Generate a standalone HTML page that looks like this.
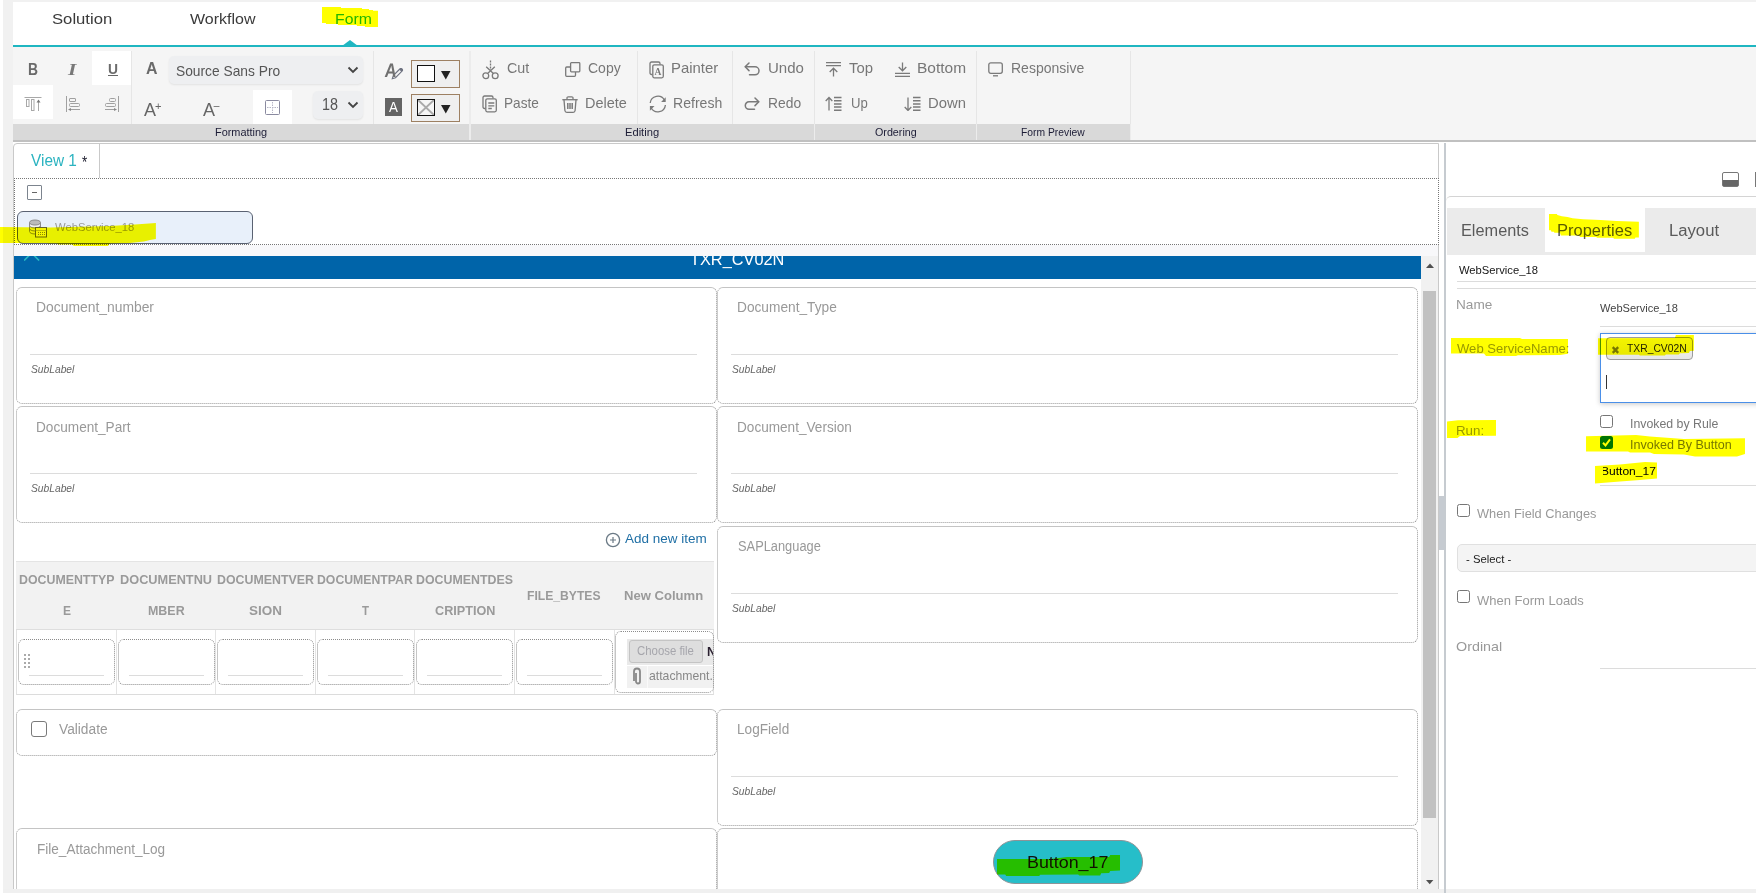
<!DOCTYPE html><html><head><meta charset="utf-8"><title>Form Designer</title><style>
html,body{margin:0;padding:0}body{width:1756px;height:893px;position:relative;overflow:hidden;background:#fff;font-family:"Liberation Sans", sans-serif}
#r{position:absolute;left:0;top:0;width:1756px;height:893px;overflow:hidden}
#r div,#r svg,#r span{position:absolute;box-sizing:border-box}
#r span{white-space:nowrap;line-height:1;transform-origin:0 0}
.hl{mix-blend-mode:multiply}
</style></head><body><div id="r">
<div style="left:3px;top:0px;width:1753px;height:893px;background:#f1f1f1"></div>
<div style="left:13px;top:2px;width:1743px;height:887px;background:#fff"></div>
<div style="left:13px;top:45px;width:1743px;height:2px;background:#1fb6c1"></div>
<svg style="left:342px;top:40px;" width="16" height="6" viewBox="0 0 16 6"><path d="M0 6 L8 0 L16 6Z" fill="#1fb6c1"/></svg>
<div style="left:13px;top:47px;width:1743px;height:77px;background:#f5f5f5"></div>
<div style="left:13px;top:124px;width:1117px;height:16px;background:#d9d9d9"></div>
<div style="left:1130px;top:124px;width:626px;height:16px;background:#f5f5f5"></div>
<div style="left:13px;top:140px;width:1743px;height:2px;background:#c0c0c0"></div>
<div style="left:131px;top:51px;width:1px;height:73px;background:#e6e6e6"></div>
<div style="left:373px;top:51px;width:1px;height:73px;background:#e6e6e6"></div>
<div style="left:637px;top:51px;width:1px;height:73px;background:#e6e6e6"></div>
<div style="left:732px;top:51px;width:1px;height:73px;background:#e6e6e6"></div>
<div style="left:814px;top:51px;width:1px;height:73px;background:#e6e6e6"></div>
<div style="left:976px;top:51px;width:1px;height:73px;background:#e6e6e6"></div>
<div style="left:1130px;top:51px;width:1px;height:73px;background:#e6e6e6"></div>
<div style="left:469px;top:51px;width:2px;height:89px;background:#ececec"></div>
<div style="left:814px;top:124px;width:1px;height:16px;background:#ececec"></div>
<div style="left:976px;top:124px;width:1px;height:16px;background:#ececec"></div>
<div style="left:1130px;top:124px;width:1px;height:16px;background:#ececec"></div>
<div style="left:92px;top:51px;width:39px;height:34px;background:#fff"></div>
<div style="left:13px;top:85px;width:40px;height:34px;background:#fff"></div>
<div style="left:253px;top:90px;width:39px;height:34px;background:#fff"></div>
<div style="left:107.5px;top:75px;width:10px;height:1px;background:#666"></div>
<svg style="left:24px;top:96px;" width="18" height="17" viewBox="0 0 18 17"><g fill="none" stroke="#a8a8a8" stroke-width="1"><path d="M0.5 1.5h17"/><rect x="2.5" y="3.5" width="2.5" height="7"/><rect x="7.5" y="3.5" width="2.5" height="11"/><path d="M14.5 15V5"/></g><path d="M12.5 6.5l2-3 2 3z" fill="#777"/></svg>
<svg style="left:65px;top:96px;" width="16" height="17" viewBox="0 0 16 17"><g fill="none" stroke="#a0a0a0" stroke-width="1"><path d="M1.5 0v16"/><rect x="4.5" y="2.5" width="6" height="3" rx="0.4"/><rect x="4.5" y="7.5" width="10" height="3" rx="1"/><path d="M4 13.500h11"/></g><path d="M3 13.500l3-1.500v3z" fill="#888"/></svg>
<svg style="left:104px;top:96px;" width="16" height="17" viewBox="0 0 16 17"><g fill="none" stroke="#a0a0a0" stroke-width="1"><path d="M14.5 0v16"/><rect x="5.5" y="2.5" width="6" height="3" rx="1"/><rect x="1.5" y="7.5" width="10" height="3" rx="1"/><path d="M1 13.500h11"/></g><path d="M13 13.500l-3-1.500v3z" fill="#888"/></svg>
<div style="left:169px;top:56px;width:194px;height:28px;background:#eeeff1;border-radius:5px;box-shadow:0 1px 2px rgba(0,0,0,.08)"></div>
<svg style="left:347px;top:66px;" width="12" height="8" viewBox="0 0 12 8"><path d="M1.5 1.500l4.5 4.5 4.5-4.5" fill="none" stroke="#444" stroke-width="1.8"/></svg>
<svg style="left:265px;top:100px;" width="15" height="15" viewBox="0 0 15 15"><rect x="0.5" y="0.5" width="14" height="14" rx="1" fill="#fff" stroke="#8a8aa0" stroke-width="1"/><path d="M7.5 2v11M2 7.500h11" stroke="#b5b5c5" stroke-width="1" stroke-dasharray="1.5 1"/></svg>
<div style="left:313px;top:91px;width:50px;height:28px;background:#eeeff1;border-radius:5px;box-shadow:0 1px 2px rgba(0,0,0,.08)"></div>
<svg style="left:347px;top:101px;" width="12" height="8" viewBox="0 0 12 8"><path d="M1.5 1.500l4.5 4.5 4.5-4.5" fill="none" stroke="#444" stroke-width="1.8"/></svg>
<svg style="left:391px;top:68px;" width="13" height="12" viewBox="0 0 13 12"><path d="M1.3 10.7l1-3.2 6.5-6.5a1.5 1.5 0 0 1 2.2 2.2l-6.5 6.5z" fill="#f5f5f5" stroke="#6e7280" stroke-width="1.1"/><path d="M8.2 1.6l2.2 2.2 0.6-0.6a1.5 1.5 0 0 0-2.2-2.2z" fill="#6e7280"/></svg>
<div style="left:411px;top:60px;width:49px;height:28px;border:1px solid #9d8062;background:#efefef"></div>
<div style="left:417px;top:65px;width:18px;height:17px;border:1px solid #111;background:#fff"></div>
<svg style="left:441px;top:71px;" width="10" height="9" viewBox="0 0 10 9"><path d="M0 0h9.5l-4.7 8.5z" fill="#222"/></svg>
<div style="left:385px;top:98px;width:17px;height:17.5px;background:#646464"></div>
<div style="left:411px;top:94px;width:49px;height:28px;border:1px solid #9d8062;background:#efefef"></div>
<div style="left:417px;top:99px;width:18px;height:17px;border:1px solid #111;background:#f6f6f6"></div>
<svg style="left:418px;top:100px;" width="16" height="15" viewBox="0 0 16 15"><path d="M0 0L16 15M16 0L0 15" stroke="#aaa" stroke-width="2"/></svg>
<svg style="left:441px;top:105px;" width="10" height="9" viewBox="0 0 10 9"><path d="M0 0h9.5l-4.7 8.5z" fill="#222"/></svg>
<svg style="left:482px;top:60px;" width="17" height="20" viewBox="0 0 17 20"><g fill="none" stroke="#7a7a7a" stroke-width="1.3"><circle cx="3.8" cy="15.7" r="2.9"/><circle cx="13.2" cy="15.7" r="2.9"/><path d="M5.6 13.4L12.8 6.800M11.4 13.400L4.2 6.8"/><path d="M8.5 0.500v9.5" stroke-dasharray="2 1"/></g></svg>
<svg style="left:565px;top:62px;" width="16" height="15" viewBox="0 0 16 15"><g fill="none" stroke="#7a7a7a" stroke-width="1.3"><rect x="5.6" y="0.7" width="9.2" height="9.2" rx="0.8"/><path d="M5.6 5H1.7a1 1 0 0 0-1 1v7.300a1 1 0 0 0 1 1h7.800a1 1 0 0 0 1-1V9.9"/></g></svg>
<svg style="left:482px;top:95px;" width="16" height="18" viewBox="0 0 16 18"><g fill="none" stroke="#7a7a7a" stroke-width="1.3"><path d="M3.5 13.500H2.500a1.5 1.5 0 0 1-1.5-1.500V2.500a1.5 1.5 0 0 1 1.5-1.500h7a1.5 1.5 0 0 1 1.5 1.500v1"/><rect x="3.8" y="3.8" width="10.5" height="13" rx="1.5"/><path d="M6.3 8h6M6.3 10.800h6M6.3 13.500h3.5"/></g></svg>
<svg style="left:562px;top:96px;" width="16" height="17" viewBox="0 0 16 17"><g fill="none" stroke="#7a7a7a" stroke-width="1.3"><path d="M0.3 3.700h15.4"/><path d="M5 3.500V2a1.2 1.2 0 0 1 1.2-1.200h3.600a1.2 1.2 0 0 1 1.2 1.200V3.5"/><path d="M2 3.900l0.9 10.600a2 2 0 0 0 2 1.800h6.200a2 2 0 0 0 2-1.800l0.9-10.6"/><path d="M5.8 7v6M8 7v6M10.2 7v6" stroke-width="1.5"/></g></svg>
<svg style="left:649px;top:61px;" width="16" height="18" viewBox="0 0 16 18"><g fill="none" stroke="#7a7a7a" stroke-width="1.3"><path d="M3.5 13.500H2.500a1.5 1.5 0 0 1-1.5-1.500V2.500a1.5 1.5 0 0 1 1.5-1.500h7a1.5 1.5 0 0 1 1.5 1.500v1"/><rect x="3.8" y="3.8" width="10.5" height="13" rx="1.5"/></g><text x="9" y="14.3" font-family="Liberation Serif" font-size="9.5" font-weight="bold" text-anchor="middle" fill="#777">A</text></svg>
<svg style="left:649px;top:95px;" width="18" height="18" viewBox="0 0 18 18"><g fill="none" stroke="#7a7a7a" stroke-width="1.3"><path d="M1.2 8a7.6 7.6 0 0 1 14.3-2.8"/><path d="M16.4 10a7.6 7.6 0 0 1-14.3 2.8"/></g><path d="M16.7 2.300v4.600h-4.600z M0.9 15.700v-4.600h4.600z" fill="#7a7a7a"/></svg>
<svg style="left:744px;top:62px;" width="17" height="14" viewBox="0 0 17 14"><g fill="none" stroke="#7a7a7a" stroke-width="1.5" stroke-linecap="round" stroke-linejoin="round"><path d="M5 1L1.2 4.8 5 8.6"/><path d="M1.5 4.800H11a4 4 0 0 1 0 8H5.5"/></g></svg>
<svg style="left:743px;top:97px;" width="17" height="14" viewBox="0 0 17 14"><g fill="none" stroke="#7a7a7a" stroke-width="1.5" stroke-linecap="round" stroke-linejoin="round"><path d="M12 1l3.8 3.800L12 8.6"/><path d="M15.5 4.800H6a3.7 3.7 0 0 0 0 7.400h5.5"/></g></svg>
<svg style="left:825px;top:62px;" width="17" height="15" viewBox="0 0 17 15"><g fill="none" stroke="#7a7a7a" stroke-width="1.3"><path d="M1 0.700h15M1 3.700h15"/><path d="M8.5 14.500V6.500M4.7 10l3.8-3.8 3.8 3.8"/></g></svg>
<svg style="left:825px;top:96px;" width="17" height="15" viewBox="0 0 17 15"><g fill="none" stroke="#7a7a7a" stroke-width="1.3"><path d="M4 14.500V1.500M0.7 5L4 1.5 7.3 5"/><path d="M9 1.500h7.500M9 4.700h7.500M9 7.900h7.500M9 11.100h7.500M9 14.300h7.5" stroke-width="1.5"/></g></svg>
<svg style="left:894px;top:62px;" width="17" height="15" viewBox="0 0 17 15"><g fill="none" stroke="#7a7a7a" stroke-width="1.3"><path d="M1 14.300h15M1 11.300h15"/><path d="M8.5 0.500V8.500M4.7 5l3.8 3.8 3.8-3.8"/></g></svg>
<svg style="left:904px;top:96px;" width="17" height="15" viewBox="0 0 17 15"><g fill="none" stroke="#7a7a7a" stroke-width="1.3"><path d="M4 1.500V14.500M0.7 11L4 14.5 7.3 11"/><path d="M9 1.500h7.500M9 4.700h7.500M9 7.900h7.500M9 11.100h7.500M9 14.300h7.5" stroke-width="1.5"/></g></svg>
<svg style="left:988px;top:62px;" width="16" height="15" viewBox="0 0 16 15"><g fill="none" stroke="#7a7a7a" stroke-width="1.3" stroke-width="1.5"><rect x="0.8" y="0.8" width="13.5" height="10.5" rx="2"/><path d="M5 13.800h5"/></g></svg>
<div style="left:13px;top:143px;width:1426px;height:760px;border:1px solid #c9c9c9;border-radius:4px 0 0 0;background:#fff"></div>
<div style="left:99px;top:144px;width:1px;height:34px;background:#c9c9c9"></div>
<div style="left:14px;top:178px;width:1425px;height:67px;border:1px dotted #777;background:#fff"></div>
<div style="left:27px;top:185px;width:15px;height:15px;border:1px solid #7c848e;border-radius:1px;background:#fff"></div>
<div style="left:32px;top:192px;width:5px;height:1px;background:#666"></div>
<div style="left:17px;top:211px;width:236px;height:33px;border:1px solid #5a6272;border-radius:6px;background:#e8f0fa"></div>
<svg style="left:28px;top:219px;" width="20" height="19" viewBox="0 0 20 19"><g fill="#efefef" stroke="#8a8a8a" stroke-width="1"><path d="M1.5 3.5v9c0 1.4 2.5 2.5 5.5 2.500s5.5-1.1 5.5-2.500v-9"/><ellipse cx="7" cy="3.5" rx="5.5" ry="2.5" fill="#bbb"/><path d="M1.5 6.500c0 1.4 2.5 2.5 5.5 2.500s5.5-1.1 5.5-2.500M1.5 9.500c0 1.4 2.5 2.5 5.5 2.500s5.5-1.1 5.5-2.5" fill="none"/></g><rect x="7.5" y="8.5" width="11" height="9.5" fill="#f4f4f4" stroke="#666" stroke-width="1"/><path d="M7.5 11.500h11M10 13.500h7M10 15.500h7" stroke="#888" stroke-width="1" stroke-dasharray="1 1"/></svg>
<div style="left:14px;top:245px;width:1424px;height:11px;background:#f8f8fa"></div>
<div style="left:14px;top:256px;width:1407px;height:23px;background:#0064a9;overflow:hidden"><span style="left:675.700px;top:-5px;font-size:17px;color:#fff;transform:scaleX(0.960)">TXR_CV02N</span></div>
<svg style="left:24px;top:256px;" width="16" height="5" viewBox="0 0 16 5"><path d="M0.1 4.5L7.6 -3 15.1 4.5" fill="none" stroke="#27b7c3" stroke-width="1.6"/></svg>
<div style="left:1421px;top:256px;width:17px;height:633px;background:#f1f1f1"></div>
<div style="left:1423px;top:291px;width:13px;height:527px;background:#c1c1c1"></div>
<svg style="left:1426px;top:263px;" width="8" height="5" viewBox="0 0 8 5"><path d="M0 5L4 0.5 8 5z" fill="#505050"/></svg>
<svg style="left:1426px;top:880px;" width="8" height="5" viewBox="0 0 8 5"><path d="M0 0L3.7 4.3 7.4 0z" fill="#505050"/></svg>
<div style="left:16px;top:287px;width:701px;height:117px;border:1px dotted #999;border-top:1px solid #c4c4c4;border-radius:6px;background:#fff"></div>
<div style="left:30px;top:354px;width:667px;height:1px;background:#dcdcdc"></div>
<div style="left:717px;top:287px;width:701px;height:117px;border:1px dotted #999;border-top:1px solid #c4c4c4;border-radius:6px;background:#fff"></div>
<div style="left:731px;top:354px;width:667px;height:1px;background:#dcdcdc"></div>
<div style="left:16px;top:406px;width:701px;height:117px;border:1px dotted #999;border-top:1px solid #c4c4c4;border-radius:6px;background:#fff"></div>
<div style="left:30px;top:473px;width:667px;height:1px;background:#dcdcdc"></div>
<div style="left:717px;top:406px;width:701px;height:117px;border:1px dotted #999;border-top:1px solid #c4c4c4;border-radius:6px;background:#fff"></div>
<div style="left:731px;top:473px;width:667px;height:1px;background:#dcdcdc"></div>
<div style="left:717px;top:526px;width:701px;height:117px;border:1px dotted #999;border-top:1px solid #c4c4c4;border-radius:6px;background:#fff"></div>
<div style="left:731px;top:593px;width:667px;height:1px;background:#dcdcdc"></div>
<div style="left:717px;top:709px;width:701px;height:117px;border:1px dotted #999;border-top:1px solid #c4c4c4;border-radius:6px;background:#fff"></div>
<div style="left:731px;top:776px;width:667px;height:1px;background:#dcdcdc"></div>
<svg style="left:605px;top:532px;" width="16" height="16" viewBox="0 0 16 16"><circle cx="8" cy="8" r="6.6" fill="none" stroke="#6b7a86" stroke-width="1.3"/><path d="M5 8h6M8 5v6" stroke="#6b7a86" stroke-width="1.2"/></svg>
<div style="left:16px;top:561px;width:698px;height:69px;background:#f2f2f2;border-top:1px solid #e4e4e4;border-bottom:1px solid #dedede"></div>
<div style="left:16px;top:630px;width:698px;height:65px;border-bottom:1px solid #dcdcdc;border-left:1px solid #e2e2e2;border-right:1px solid #e2e2e2"></div>
<div style="left:116px;top:630px;width:1px;height:64px;background:#e4e4e4"></div>
<div style="left:215px;top:630px;width:1px;height:64px;background:#e4e4e4"></div>
<div style="left:315px;top:630px;width:1px;height:64px;background:#e4e4e4"></div>
<div style="left:414px;top:630px;width:1px;height:64px;background:#e4e4e4"></div>
<div style="left:514px;top:630px;width:1px;height:64px;background:#e4e4e4"></div>
<div style="left:614px;top:630px;width:1px;height:64px;background:#e4e4e4"></div>
<div style="left:18px;top:639px;width:97px;height:46px;border:1px dotted #8c8c8c;border-radius:6px"></div>
<div style="left:29px;top:675px;width:75px;height:1px;background:#dcdcdc"></div>
<div style="left:118px;top:639px;width:97px;height:46px;border:1px dotted #8c8c8c;border-radius:6px"></div>
<div style="left:129px;top:675px;width:75px;height:1px;background:#dcdcdc"></div>
<div style="left:217px;top:639px;width:97px;height:46px;border:1px dotted #8c8c8c;border-radius:6px"></div>
<div style="left:228px;top:675px;width:75px;height:1px;background:#dcdcdc"></div>
<div style="left:317px;top:639px;width:97px;height:46px;border:1px dotted #8c8c8c;border-radius:6px"></div>
<div style="left:328px;top:675px;width:75px;height:1px;background:#dcdcdc"></div>
<div style="left:416px;top:639px;width:97px;height:46px;border:1px dotted #8c8c8c;border-radius:6px"></div>
<div style="left:427px;top:675px;width:75px;height:1px;background:#dcdcdc"></div>
<div style="left:516px;top:639px;width:97px;height:46px;border:1px dotted #8c8c8c;border-radius:6px"></div>
<div style="left:527px;top:675px;width:75px;height:1px;background:#dcdcdc"></div>
<div style="left:24px;top:654px;width:2px;height:2px;background:#aaa"></div>
<div style="left:28px;top:654px;width:2px;height:2px;background:#aaa"></div>
<div style="left:24px;top:658px;width:2px;height:2px;background:#aaa"></div>
<div style="left:28px;top:658px;width:2px;height:2px;background:#aaa"></div>
<div style="left:24px;top:662px;width:2px;height:2px;background:#aaa"></div>
<div style="left:28px;top:662px;width:2px;height:2px;background:#aaa"></div>
<div style="left:24px;top:666px;width:2px;height:2px;background:#aaa"></div>
<div style="left:28px;top:666px;width:2px;height:2px;background:#aaa"></div>
<div style="left:615px;top:631px;width:99px;height:62px;border:1px dotted #8c8c8c;border-radius:6px;overflow:hidden"><div style="left:11px;top:6.500px;width:90px;height:26px;background:#e9e9e9"></div><div style="left:13px;top:7.500px;width:74px;height:23.500px;background:#dedede;border:1px solid #c4c4c4;border-radius:3px"></div><div style="left:11px;top:33.500px;width:90px;height:22px;background:#f1f1f1"></div><div style="left:31px;top:33.500px;width:1px;height:22px;background:#fafafa"></div></div>
<div style="left:706px;top:640px;width:7px;height:20px;overflow:hidden"><span style="left:1px;top:5.500px;font-size:12.500px;color:#2a2030;font-weight:bold">N</span></div>
<svg style="left:632px;top:665px;" width="10" height="22" viewBox="0 0 10 22"><path d="M2 16V6.500a3 3 0 0 1 6 0V16.500a2 2 0 0 1-4 0V8" fill="none" stroke="#888" stroke-width="1.8"/></svg>
<div style="left:648px;top:666px;width:65px;height:20px;overflow:hidden"><span style="left:1px;top:3.300px;font-size:13px;color:#888;transform:scaleX(.940)">attachment.z</span></div>
<div style="left:16px;top:709px;width:701px;height:47px;border:1px dotted #999;border-top:1px solid #c4c4c4;border-radius:6px;background:#fff"></div>
<div style="left:31px;top:721px;width:16px;height:16px;border:1.500px solid #7a7a7a;border-radius:3px;background:#fff"></div>
<div style="left:16px;top:828px;width:701px;height:80px;border:1px dotted #999;border-top:1px solid #c4c4c4;border-radius:6px;background:#fff"></div>
<div style="left:717px;top:828px;width:701px;height:80px;border:1px dotted #999;border-top:1px solid #c4c4c4;border-radius:6px;background:#fff"></div>
<div style="left:993px;top:840px;width:150px;height:44px;background:#26bec9;border:1px solid #8c9498;border-radius:22px"></div>
<div style="left:3px;top:889px;width:1753px;height:4px;background:#f0f0f0"></div>
<div style="left:1444px;top:143px;width:2px;height:750px;background:#c6cbd0"></div>
<div style="left:1439px;top:496px;width:5px;height:54px;background:#c6cbd1"></div>
<div style="left:1722px;top:172px;width:17px;height:15px;border:1px solid #777;border-radius:2px;background:#fff"></div>
<div style="left:1723px;top:180px;width:15px;height:6px;background:#666"></div>
<div style="left:1755px;top:172px;width:3px;height:15px;border:1px solid #777;background:#fff"></div>
<div style="left:1446px;top:196px;width:320px;height:700px;border:1px solid #d4d4d4;border-left:none;border-radius:5px 0 0 0;background:#fff"></div>
<div style="left:1447px;top:208px;width:309px;height:47px;background:#ebebeb"></div>
<div style="left:1545px;top:208px;width:100px;height:44px;background:#fff"></div>
<div style="left:1457px;top:281px;width:300px;height:1px;background:#dcdcdc"></div>
<div style="left:1457px;top:288px;width:300px;height:1px;background:#dcdcdc"></div>
<div style="left:1600px;top:326px;width:157px;height:1px;background:#dcdcdc"></div>
<div style="left:1600px;top:333px;width:170px;height:70px;border:1px solid #4a8fe8;background:#fff;box-shadow:0 1px 5px rgba(0,0,0,.22)"></div>
<div style="left:1606px;top:337px;width:87px;height:22.5px;border:1px solid #9c9c9c;border-radius:4px;background:linear-gradient(#f4f4f4,#e6e6e6)"></div>
<div style="left:1606px;top:375px;width:1px;height:14px;background:#333"></div>
<div style="left:1600px;top:415px;width:13px;height:13px;border:1.300px solid #767676;border-radius:2.500px;background:#fff"></div>
<div style="left:1600px;top:436px;width:13px;height:13px;background:#0075ff;border-radius:2.500px"></div>
<svg style="left:1600px;top:436px;" width="13" height="13" viewBox="0 0 13 13"><path d="M3 6.700l2.5 2.7 4.5-6" fill="none" stroke="#fff" stroke-width="2"/></svg>
<div style="left:1603.4px;top:462px;width:60px;height:18px;overflow:hidden"><span style="left:-2.800px;top:2.700px;font-size:11.700px;color:#000;transform:scaleX(1.03)">Button_17</span></div>
<div style="left:1600px;top:485px;width:157px;height:1px;background:#dcdcdc"></div>
<div style="left:1457px;top:503.5px;width:13px;height:13px;border:1.300px solid #767676;border-radius:2.500px;background:#fff"></div>
<div style="left:1457px;top:544px;width:310px;height:28px;border:1px solid #e0e0e0;border-radius:5px;background:#f4f4f4"></div>
<div style="left:1457px;top:590px;width:13px;height:13px;border:1.300px solid #767676;border-radius:2.500px;background:#fff"></div>
<div style="left:1600px;top:668px;width:157px;height:1px;background:#dcdcdc"></div>
<div style="left:1446px;top:889px;width:310px;height:4px;background:#f0f0f0"></div>
<span style="left:52.21px;top:11.00px;font-size:15px;color:#3a3a3a;transform:scaleX(1.1109);">Solution</span>
<span style="left:189.87px;top:11.00px;font-size:15px;color:#3a3a3a;transform:scaleX(1.0662);">Workflow</span>
<span style="left:334.75px;top:11.00px;font-size:15px;color:#22b6c2;transform:scaleX(1.0522);">Form</span>
<span style="left:28.00px;top:62.00px;font-size:16px;color:#6a6a6a;font-weight:bold;transform:scaleX(0.8649);">B</span>
<span style="left:68.30px;top:61.00px;font-size:17px;color:#787878;font-family:'Liberation Serif', serif;font-weight:bold;font-style:italic;transform:scaleX(1.2679);">I</span>
<span style="left:107.50px;top:61.00px;font-size:15.5px;color:#6c6c6c;font-weight:bold;transform:scaleX(0.8926);">U</span>
<span style="left:146.00px;top:61.00px;font-size:16px;color:#6a6a6a;font-weight:bold;transform:scaleX(0.9946);">A</span>
<span style="left:175.87px;top:63.00px;font-size:15px;color:#555;transform:scaleX(0.9189);">Source Sans Pro</span>
<span style="left:144.00px;top:101.00px;font-size:18.5px;color:#666;transform:scaleX(0.9722);">A</span>
<span style="left:154.50px;top:101.00px;font-size:11px;color:#666;transform:scaleX(1.0097);">+</span>
<span style="left:203.00px;top:101.00px;font-size:18.5px;color:#666;transform:scaleX(0.9722);">A</span>
<span style="left:212.50px;top:101.00px;font-size:11px;color:#666;transform:scaleX(1.0874);">&#8722;</span>
<span style="left:321.50px;top:96.00px;font-size:16.3px;color:#555;transform:scaleX(0.8828);">18</span>
<span style="left:385.50px;top:61.00px;font-size:19.5px;color:#707070;font-weight:bold;transform:scaleX(0.8373) skewX(-7deg);">A</span>
<span style="left:389.30px;top:100.00px;font-size:14px;color:#fff;transform:scaleX(0.9525);">A</span>
<span style="left:506.69px;top:61.00px;font-size:14.5px;color:#777;transform:scaleX(0.9866);">Cut</span>
<span style="left:587.92px;top:61.00px;font-size:14.5px;color:#777;transform:scaleX(0.9644);">Copy</span>
<span style="left:504.22px;top:96.00px;font-size:14.5px;color:#777;transform:scaleX(0.9384);">Paste</span>
<span style="left:584.81px;top:96.00px;font-size:14.5px;color:#777;transform:scaleX(0.9974);">Delete</span>
<span style="left:670.81px;top:61.00px;font-size:14.5px;color:#777;transform:scaleX(1.0278);">Painter</span>
<span style="left:673.02px;top:96.00px;font-size:14.5px;color:#777;transform:scaleX(0.9707);">Refresh</span>
<span style="left:768.23px;top:61.00px;font-size:14.5px;color:#777;transform:scaleX(1.0351);">Undo</span>
<span style="left:767.62px;top:96.00px;font-size:14.5px;color:#777;transform:scaleX(0.9545);">Redo</span>
<span style="left:849.01px;top:61.00px;font-size:14.5px;color:#777;transform:scaleX(1.0266);">Top</span>
<span style="left:851.00px;top:96.00px;font-size:14.5px;color:#777;transform:scaleX(0.9058);">Up</span>
<span style="left:917.30px;top:61.00px;font-size:14.5px;color:#777;transform:scaleX(1.0677);">Bottom</span>
<span style="left:928.00px;top:96.00px;font-size:14.5px;color:#777;transform:scaleX(1.0229);">Down</span>
<span style="left:1010.82px;top:61.00px;font-size:14.5px;color:#777;transform:scaleX(0.9668);">Responsive</span>
<span style="left:215.11px;top:128.00px;font-size:10.2px;color:#1c1c36;transform:scaleX(1.0713);">Formatting</span>
<span style="left:624.78px;top:128.00px;font-size:10.2px;color:#1c1c36;transform:scaleX(1.0946);">Editing</span>
<span style="left:874.84px;top:128.00px;font-size:10.2px;color:#1c1c36;transform:scaleX(1.0516);">Ordering</span>
<span style="left:1020.84px;top:128.00px;font-size:10.2px;color:#1c1c36;transform:scaleX(1.0123);">Form Preview</span>
<span style="left:30.52px;top:153.00px;font-size:16px;color:#2bb3c0;transform:scaleX(0.9613);">View 1</span>
<span style="left:82.30px;top:154.00px;font-size:17px;color:#223;transform:scaleX(0.7849);">*</span>
<span style="left:54.83px;top:222.00px;font-size:11.5px;color:#999;transform:scaleX(0.9792);">WebService_18</span>
<span style="left:36.07px;top:300.00px;font-size:14px;color:#999;transform:scaleX(0.9910);">Document_number</span>
<span style="left:31.20px;top:364.00px;font-size:10.5px;color:#666;font-style:italic;transform:scaleX(0.9758);">SubLabel</span>
<span style="left:737.06px;top:300.00px;font-size:14px;color:#999;transform:scaleX(0.9785);">Document_Type</span>
<span style="left:732.20px;top:364.00px;font-size:10.5px;color:#666;font-style:italic;transform:scaleX(0.9758);">SubLabel</span>
<span style="left:36.08px;top:420.00px;font-size:14px;color:#999;transform:scaleX(0.9725);">Document_Part</span>
<span style="left:31.20px;top:483.00px;font-size:10.5px;color:#666;font-style:italic;transform:scaleX(0.9758);">SubLabel</span>
<span style="left:737.07px;top:420.00px;font-size:14px;color:#999;transform:scaleX(0.9709);">Document_Version</span>
<span style="left:732.20px;top:483.00px;font-size:10.5px;color:#666;font-style:italic;transform:scaleX(0.9758);">SubLabel</span>
<span style="left:737.58px;top:539.00px;font-size:14px;color:#999;transform:scaleX(0.9170);">SAPLanguage</span>
<span style="left:732.20px;top:603.00px;font-size:10.5px;color:#666;font-style:italic;transform:scaleX(0.9758);">SubLabel</span>
<span style="left:737.04px;top:722.00px;font-size:14px;color:#999;transform:scaleX(0.9721);">LogField</span>
<span style="left:732.20px;top:786.00px;font-size:10.5px;color:#666;font-style:italic;transform:scaleX(0.9758);">SubLabel</span>
<span style="left:625.03px;top:532.00px;font-size:13.5px;color:#1f6fa5;transform:scaleX(0.9989);">Add new item</span>
<span style="left:18.91px;top:573.00px;font-size:13.3px;color:#9a9a9a;font-weight:bold;transform:scaleX(0.9295);">DOCUMENTTYP</span>
<span style="left:63.00px;top:604.00px;font-size:13.3px;color:#9a9a9a;font-weight:bold;transform:scaleX(0.9014);">E</span>
<span style="left:119.95px;top:573.00px;font-size:13.3px;color:#9a9a9a;font-weight:bold;transform:scaleX(0.9589);">DOCUMENTNU</span>
<span style="left:147.85px;top:604.00px;font-size:13.3px;color:#9a9a9a;font-weight:bold;transform:scaleX(0.9359);">MBER</span>
<span style="left:216.88px;top:573.00px;font-size:13.3px;color:#9a9a9a;font-weight:bold;transform:scaleX(0.9310);">DOCUMENTVER</span>
<span style="left:248.80px;top:604.00px;font-size:13.3px;color:#9a9a9a;font-weight:bold;transform:scaleX(1.0132);">SION</span>
<span style="left:316.94px;top:573.00px;font-size:13.3px;color:#9a9a9a;font-weight:bold;transform:scaleX(0.9219);">DOCUMENTPAR</span>
<span style="left:362.00px;top:604.00px;font-size:13.3px;color:#9a9a9a;font-weight:bold;transform:scaleX(0.8615);">T</span>
<span style="left:415.88px;top:573.00px;font-size:13.3px;color:#9a9a9a;font-weight:bold;transform:scaleX(0.9314);">DOCUMENTDES</span>
<span style="left:434.56px;top:604.00px;font-size:13.3px;color:#9a9a9a;font-weight:bold;transform:scaleX(0.9504);">CRIPTION</span>
<span style="left:527.38px;top:589.00px;font-size:13.3px;color:#9a9a9a;font-weight:bold;transform:scaleX(0.9134);">FILE_BYTES</span>
<span style="left:623.95px;top:589.00px;font-size:13.3px;color:#9a9a9a;font-weight:bold;transform:scaleX(0.9830);">New Column</span>
<span style="left:637.19px;top:645.00px;font-size:12.3px;color:#a6a6ac;transform:scaleX(0.9258);">Choose file</span>
<span style="left:59.44px;top:722.00px;font-size:14px;color:#999;transform:scaleX(0.9805);">Validate</span>
<span style="left:36.55px;top:842.00px;font-size:14px;color:#999;transform:scaleX(0.9681);">File_Attachment_Log</span>
<span style="left:1026.98px;top:854.00px;font-size:16.5px;color:#111;transform:scaleX(1.0812);">Button_17</span>
<span style="left:1461.39px;top:223.00px;font-size:16px;color:#5a5a5a;transform:scaleX(1.0186);">Elements</span>
<span style="left:1557.18px;top:223.00px;font-size:16px;color:#5a5a5a;transform:scaleX(1.0307);">Properties</span>
<span style="left:1668.96px;top:223.00px;font-size:16px;color:#5a5a5a;transform:scaleX(1.0417);">Layout</span>
<span style="left:1458.67px;top:264.00px;font-size:11.7px;color:#151515;transform:scaleX(0.9587);">WebService_18</span>
<span style="left:1455.53px;top:298.00px;font-size:13.3px;color:#999;transform:scaleX(1.0239);">Name</span>
<span style="left:1599.70px;top:302.00px;font-size:11.7px;color:#444;transform:scaleX(0.9466);">WebService_18</span>
<span style="left:1456.80px;top:342.00px;font-size:13.3px;color:#999;transform:scaleX(0.9837);">Web ServiceName:</span>
<span style="left:1611.30px;top:345.00px;font-size:10.5px;color:#777;transform:scaleX(0.9667);">&#10006;</span>
<span style="left:1627.24px;top:342.00px;font-size:11.7px;color:#222;transform:scaleX(0.8831);">TXR_CV02N</span>
<span style="left:1629.71px;top:418.00px;font-size:12.8px;color:#777;transform:scaleX(0.9638);">Invoked by Rule</span>
<span style="left:1456.03px;top:424.00px;font-size:13.3px;color:#999;transform:scaleX(1.0015);">Run:</span>
<span style="left:1629.57px;top:439.00px;font-size:12.8px;color:#777;transform:scaleX(0.9793);">Invoked By Button</span>
<span style="left:1476.70px;top:507.00px;font-size:13.3px;color:#999;transform:scaleX(0.9624);">When Field Changes</span>
<span style="left:1465.66px;top:553.00px;font-size:11.7px;color:#222;transform:scaleX(0.9682);">- Select -</span>
<span style="left:1476.80px;top:594.00px;font-size:13.3px;color:#999;transform:scaleX(0.9766);">When Form Loads</span>
<span style="left:1455.93px;top:640.00px;font-size:13.3px;color:#999;transform:scaleX(1.0773);">Ordinal</span>
<svg class="hl" style="left:322px;top:7px" width="56" height="20.1" viewBox="0 0 56 20.1"><polygon points="0.0,0.0 18.9,0.0 19.0,1.0 40.0,1.0 40.1,2.0 47.0,2.0 47.1,3.0 51.0,3.0 51.1,3.8 56.0,3.8 56.0,20.1 43.0,20.1 42.9,19.1 34.9,19.1 34.8,18.1 16.0,18.1 15.9,17.0 4.0,17.0 3.9,16.0 0.0,16.0" fill="#ffff00"/></svg>
<svg class="hl" style="left:0px;top:223px" width="155.9" height="23.099999999999994" viewBox="0 0 155.9 23.099999999999994"><polygon points="0.0,4.0 50.0,4.5 110.0,3.0 135.0,1.5 155.9,0.0 155.9,16.1 150.0,17.0 144.0,18.6 130.0,20.1 110.0,20.5 108.0,23.1 74.0,23.1 72.0,21.6 58.0,21.6 57.0,20.6 48.0,20.6 47.0,19.9 0.0,19.9" fill="#ffff00"/></svg>
<svg class="hl" style="left:1549.1px;top:214.1px" width="89.90000000000009" height="24.700000000000017" viewBox="0 0 89.90000000000009 24.700000000000017"><polygon points="0.0,0.0 7.8,0.0 8.4,0.9 12.8,2.2 18.5,3.1 23.5,4.2 34.1,5.2 51.7,6.1 67.7,7.1 89.9,7.8 89.9,23.5 86.4,23.5 85.9,24.7 64.9,24.7 64.4,23.8 47.9,23.8 47.4,22.9 30.9,22.9 30.4,21.6 11.9,21.6 10.9,18.8 5.4,18.8 4.9,17.8 2.4,17.8 1.9,16.3 0.0,16.3" fill="#ffff00"/></svg>
<svg class="hl" style="left:1451px;top:338.2px" width="117" height="18.0" viewBox="0 0 117 18.0"><polygon points="0.0,0.0 69.0,0.0 71.0,0.9 117.0,0.9 117.0,15.8 109.0,17.0 67.0,17.3 65.0,18.0 35.0,18.0 33.0,15.4 0.0,15.4" fill="#ffff00"/></svg>
<svg class="hl" style="left:1598.1px;top:335px" width="95.90000000000009" height="20.600000000000023" viewBox="0 0 95.90000000000009 20.600000000000023"><polygon points="0.0,3.3 76.9,3.0 77.9,0.0 95.9,0.0 95.9,15.7 91.9,16.0 90.9,18.0 81.9,18.2 80.9,19.5 67.9,19.6 66.9,20.6 41.9,20.6 40.9,19.7 0.0,19.7" fill="#ffff00"/></svg>
<svg class="hl" style="left:1447px;top:420.1px" width="49" height="18.399999999999977" viewBox="0 0 49 18.399999999999977"><polygon points="0.0,1.4 11.0,0.2 49.0,0.0 49.0,15.7 13.0,15.9 10.0,18.4 0.0,18.4" fill="#ffff00"/></svg>
<svg class="hl" style="left:1586px;top:435px" width="159" height="21.600000000000023" viewBox="0 0 159 21.600000000000023"><polygon points="0.0,1.3 50.0,0.0 64.0,1.5 98.0,4.0 159.0,3.3 159.0,19.0 151.0,21.6 109.0,21.6 98.0,19.5 68.0,19.0 64.0,17.6 44.0,17.6 42.0,16.6 0.0,16.6" fill="#ffff00"/></svg>
<svg class="hl" style="left:1595px;top:462.1px" width="62" height="21.599999999999966" viewBox="0 0 62 21.599999999999966"><polygon points="0.0,4.0 25.0,2.5 50.0,0.0 62.0,0.5 62.0,16.6 45.0,18.1 25.0,19.6 0.0,21.6" fill="#ffff00"/></svg>
<svg class="hl" style="left:996.8px;top:855px" width="123.20000000000005" height="20.899999999999977" viewBox="0 0 123.20000000000005 20.899999999999977"><polygon points="0.0,4.1 53.2,4.1 70.2,2.0 112.2,1.9 113.2,0.0 123.2,0.0 123.2,15.6 113.2,16.0 112.2,18.1 104.2,18.3 103.2,20.6 82.2,20.6 81.2,19.6 43.2,19.8 42.2,20.9 9.2,20.9 8.2,19.6 0.0,19.6" fill="#ffff00"/></svg>
</div></body></html>
